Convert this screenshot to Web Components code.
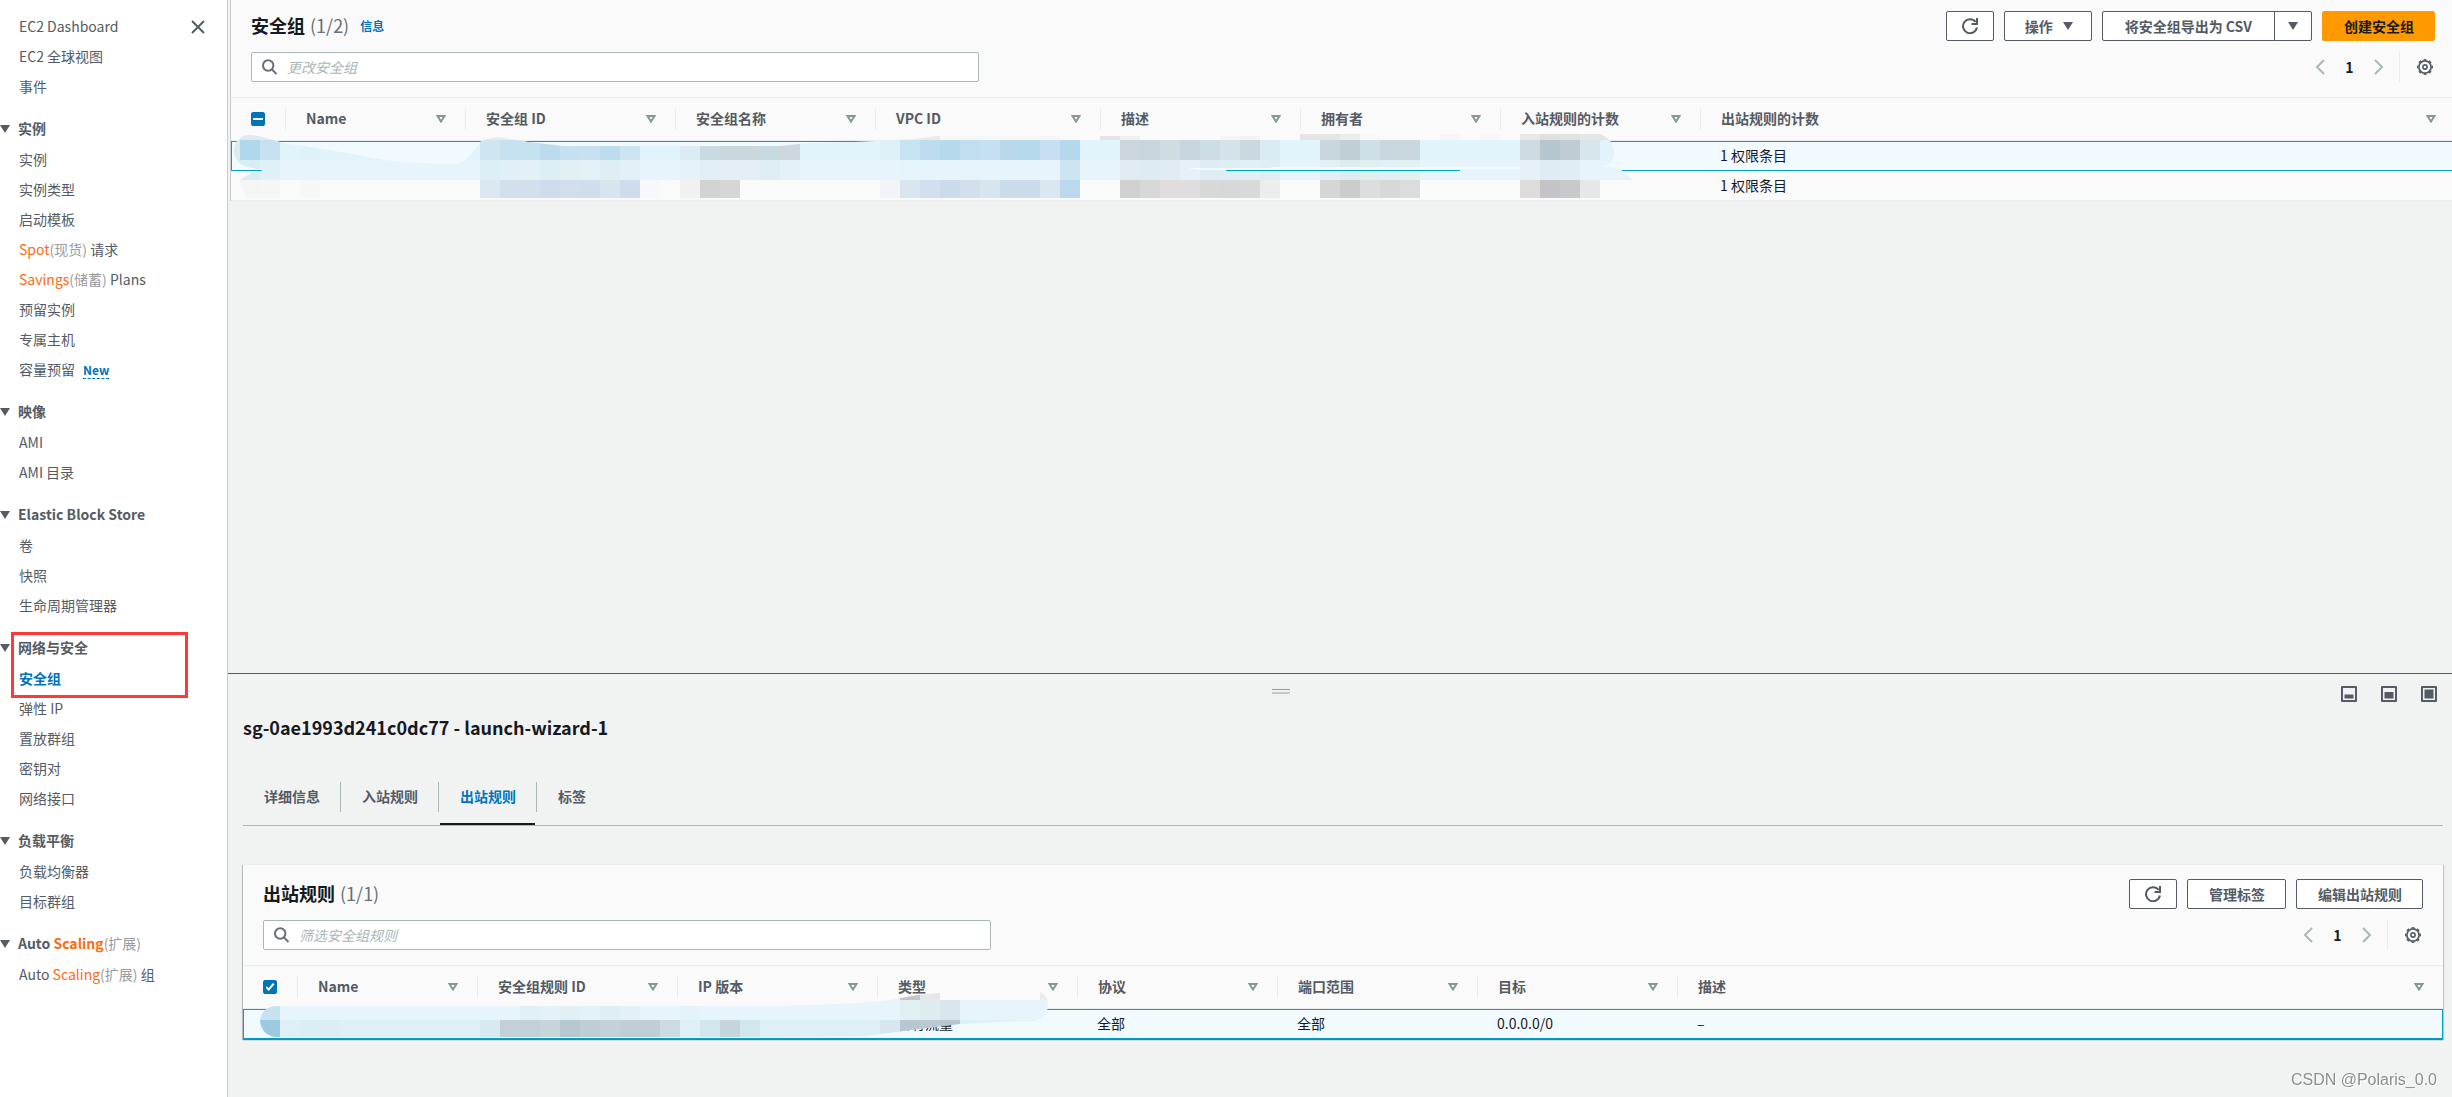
<!DOCTYPE html>
<html lang="zh-CN">
<head>
<meta charset="utf-8">
<title>安全组 | EC2 管理控制台</title>
<style>
  body{
    margin: 0;
    min-height: 100vh;
    display: flex;
    background: #f1f3f3;
    color: #16191f;
    font-family: "Noto Sans CJK SC", "Noto Sans", sans-serif;
    font-size: 14px;
    line-height: 22px;
  }
  main{
    flex: 1;
    min-width: 0;
    display: flex;
    flex-direction: column;
  }
  .listPanel{
    margin-left: 2px;
    border-left: 1px solid #c8cccc;
    --edge: 17px;
  }
  .info{
    font-size: 12px;
    font-weight: 700;
    color: #0073bb;
    text-decoration: none;
  }
  .mark{
    position: fixed;
    right: 15px;
    bottom: 6px;
    font-family: "Liberation Sans", Arial, sans-serif;
    font-size: 16px;
    color: #8c8e8e;
    text-shadow: 1px 1px 0 #fff;
  }
</style>
</head>
<body>
<nav-sidebar>
  <nav-link close>EC2 Dashboard</nav-link>
  <nav-link>EC2 全球视图</nav-link>
  <nav-link>事件</nav-link>
  <nav-group>
    <span slot="title">实例</span>
    <nav-link>实例</nav-link>
    <nav-link>实例类型</nav-link>
    <nav-link>启动模板</nav-link>
    <nav-link><hint-word note="现货">Spot</hint-word> 请求</nav-link>
    <nav-link><hint-word note="储蓄">Savings</hint-word> Plans</nav-link>
    <nav-link>预留实例</nav-link>
    <nav-link>专属主机</nav-link>
    <nav-link badge="New">容量预留</nav-link>
  </nav-group>
  <nav-group>
    <span slot="title">映像</span>
    <nav-link>AMI</nav-link>
    <nav-link>AMI 目录</nav-link>
  </nav-group>
  <nav-group>
    <span slot="title">Elastic Block Store</span>
    <nav-link>卷</nav-link>
    <nav-link>快照</nav-link>
    <nav-link>生命周期管理器</nav-link>
  </nav-group>
  <nav-group framed>
    <span slot="title">网络与安全</span>
    <nav-link active>安全组</nav-link>
    <nav-link>弹性 IP</nav-link>
    <nav-link>置放群组</nav-link>
    <nav-link>密钥对</nav-link>
    <nav-link>网络接口</nav-link>
  </nav-group>
  <nav-group>
    <span slot="title">负载平衡</span>
    <nav-link>负载均衡器</nav-link>
    <nav-link>目标群组</nav-link>
  </nav-group>
  <nav-group>
    <span slot="title">Auto <hint-word note="扩展">Scaling</hint-word></span>
    <nav-link>Auto <hint-word note="扩展">Scaling</hint-word> 组</nav-link>
  </nav-group>
</nav-sidebar>

<main>
  <table-panel class="listPanel" heading="安全组" counter="(1/2)" search="更改安全组">
    <a slot="info" class="info" href="#">信息</a>
    <icon-button slot="actions"></icon-button>
    <text-button slot="actions" caret>操作</text-button>
    <split-button slot="actions">将安全组导出为 CSV</split-button>
    <text-button slot="actions" primary>创建安全组</text-button>
    <data-table id="groups"><smudge-layer name="groups"></smudge-layer></data-table>
  </table-panel>

  <split-panel heading="sg-0ae1993d241c0dc77 - launch-wizard-1">
    <tab-bar slot="tabs" tabs="详细信息,入站规则,出站规则,标签" active="2"></tab-bar>
    <table-panel boxed heading="出站规则" counter="(1/1)" search="筛选安全组规则">
      <icon-button slot="actions"></icon-button>
      <text-button slot="actions">管理标签</text-button>
      <text-button slot="actions">编辑出站规则</text-button>
      <data-table id="rules" enclosed><smudge-layer name="rules"></smudge-layer></data-table>
    </table-panel>
  </split-panel>
</main>
<div class="mark">CSDN @Polaris_0.0</div>

<script>
// attaches an open shadow root with the given markup
class BaseElement extends HTMLElement {
  render(html) {
    if (!this.shadowRoot) this.attachShadow({ mode: 'open' });
    this.shadowRoot.innerHTML = html;
  }
}

class NavSidebar extends BaseElement {
  connectedCallback() {
    this.render(`
<style>
  :host{
    display: block;
    flex: none;
    box-sizing: border-box;
    width: 228px;
    padding: 12px 0;
    border-right: 1px solid #c8cccc;
    background: #fff;
    color: #545b64;
  }
</style>
<nav><slot></slot></nav>`);
  }
}

class NavGroup extends BaseElement {
  connectedCallback() {
    this.render(`
<style>
  :host{
    display: block;
    position: relative;
    margin-top: 11px;
  }
  .title{
    box-sizing: border-box;
    height: 32px;
    display: flex;
    align-items: center;
    gap: 8px;
    padding-bottom: 2px;
    font-weight: 700;
  }
  .title svg{ margin-top: 2px; }
  .frame{ display: none; }
  :host([framed]) .frame{
    display: block;
    position: absolute;
    box-sizing: border-box;
    top: 0;
    left: 11px;
    width: 177px;
    height: 66px;
    border: 3px solid #ff3838;
  }
</style>
<div class="title">
  <svg width="10" height="8" fill="#545b64"><path d="M0 0h10L5 8z"/></svg>
  <slot name="title"></slot>
</div>
<slot></slot>
<div class="frame"></div>`);
  }
}

class NavLink extends BaseElement {
  connectedCallback() {
    const badge = this.getAttribute('badge');
    this.render(`
<style>
  :host{
    box-sizing: border-box;
    display: flex;
    align-items: center;
    height: 30px;
    padding: 0 22px 2px 19px;
  }
  a{
    color: inherit;
    text-decoration: none;
  }
  :host([active]) a{
    color: #0073bb;
    font-weight: 700;
  }
  .badge{
    margin: 2px 0 0 8px;
    border-bottom: 1px dashed #0073bb;
    color: #0073bb;
    font-size: 12px;
    font-weight: 700;
    line-height: 16px;
  }
  button{
    margin: 2px 0 0 auto;
    padding: 0;
    border: 0;
    background: none;
    line-height: 0;
  }
</style>
<a href="#"><slot></slot></a>
${badge ? `<span class="badge">${badge}</span>` : ''}
${this.hasAttribute('close') ? `<button aria-label="关闭"><svg width="14" height="14" stroke="#545b64" stroke-width="2"><path d="M1 1l12 12M13 1L1 13"/></svg></button>` : ''}`);
  }
}

class HintWord extends BaseElement {
  connectedCallback() {
    this.render(`
<style>
  :host{ color: #ff6a13; }
  .note{ color: #9a9c9f; font-weight: 400; }
</style>
<slot></slot><span class="note">(${this.getAttribute('note')})</span>`);
  }
}

const buttonStyle = `
  :host{ display: flex; }
  button{
    box-sizing: border-box;
    height: 30px;
    display: flex;
    align-items: center;
    justify-content: center;
    gap: 10px;
    padding: 0 20px 1px 21px;
    border: 1px solid #545b64;
    border-radius: 2px;
    background: #fff;
    color: #545b64;
    font: inherit;
    font-weight: 700;
    line-height: 22px;
    white-space: nowrap;
  }`;
const caret = '<svg width="10" height="8" fill="#545b64"><path d="M0 0h10L5 8z"/></svg>';

class IconButton extends BaseElement {
  connectedCallback() {
    this.render(`
<style>${buttonStyle}
  button{ width: 48px; padding: 0; }
</style>
<button aria-label="刷新">
  <svg width="16" height="16" viewBox="0 0 16 16" fill="none" stroke="#545b64" stroke-width="2"><path d="M14.9 9.5A7 7 0 1 1 13.6 4M15 0v6H9.5"/></svg>
</button>`);
  }
}

class TextButton extends BaseElement {
  connectedCallback() {
    this.render(`
<style>${buttonStyle}
  :host([primary]) button{
    border-color: #ff9900;
    background: #ff9900;
    color: #16191f;
  }
  :host([caret]) button{ padding: 0 18px 1px 20px; }
</style>
<button><slot></slot>${this.hasAttribute('caret') ? caret : ''}</button>`);
  }
}

class SplitButton extends BaseElement {
  connectedCallback() {
    this.render(`
<style>${buttonStyle}
  .main{
    padding: 0 22px 1px;
    border-radius: 2px 0 0 2px;
  }
  .more{
    width: 38px;
    margin-left: -1px;
    padding: 0;
    border-radius: 0 2px 2px 0;
  }
</style>
<button class="main"><slot></slot></button>
<button class="more" aria-label="更多">${caret}</button>`);
  }
}

class TablePanel extends BaseElement {
  connectedCallback() {
    this.render(`
<style>
  :host{
    display: block;
    background: #fafafa;
  }
  :host([boxed]){
    border-top: 1px solid #eaeded;
    box-shadow: 0 1px 1px 0 rgba(0,28,36,.4), 1px 1px 1px 0 rgba(0,28,36,.15), -1px 1px 1px 0 rgba(0,28,36,.2);
  }
  header{
    display: flex;
    flex-direction: column;
    gap: 11px;
    padding: 11px var(--edge, 20px) 15px 20px;
    border-bottom: 1px solid #eaeded;
  }
  :host([boxed]) header{ padding-top: 14px; }
  .row{
    height: 30px;
    display: flex;
    align-items: center;
  }
  h2{
    margin: 0 5px 0 0;
    padding-bottom: 2px;
    font-size: 18px;
    font-weight: 700;
  }
  .counter{
    margin-right: 11px;
    padding-bottom: 2px;
    font-size: 18px;
    color: #687078;
  }
  .actions{
    margin-left: auto;
    display: flex;
    gap: 10px;
  }
  .search{
    box-sizing: border-box;
    width: 728px;
    height: 30px;
    display: flex;
    align-items: center;
    gap: 9px;
    padding: 0 10px;
    border: 1px solid #aab7b8;
    border-radius: 2px;
    background: #fff;
  }
  input{
    flex: 1;
    padding: 0;
    border: 0;
    outline: 0;
    background: none;
    font: inherit;
  }
  input::placeholder{
    color: #aab7b8;
    font-style: italic;
  }
  .pages{
    margin-left: auto;
    display: flex;
    align-items: center;
    font-weight: 700;
  }
  .pages button{
    width: 16px;
    height: 16px;
    display: flex;
    justify-content: center;
    padding: 0;
    border: 0;
    background: none;
  }
  .num{ width: 43px; text-align: center; }
  .gear{
    display: flex;
    margin-left: 12px;
    padding: 7px 2px 7px 17px;
    border-left: 1px solid #eaeded;
  }
</style>
<header>
  <div class="row">
    <h2>${this.getAttribute('heading')}</h2>
    <span class="counter">${this.getAttribute('counter')}</span>
    <slot name="info"></slot>
    <div class="actions"><slot name="actions"></slot></div>
  </div>
  <div class="row">
    <label class="search">
      <svg width="16" height="16" viewBox="0 0 16 16" fill="none" stroke="#687078" stroke-width="2"><circle cx="6.200" cy="6.500" r="5.200"/><path d="M10 10.500l4.500 4.500"/></svg>
      <input type="search" placeholder="${this.getAttribute('search')}" aria-label="${this.getAttribute('search')}">
    </label>
    <div class="pages">
      <button aria-label="上一页"><svg width="10" height="16" fill="none" stroke="#aab7b8" stroke-width="2"><path d="M9 1L2 8l7 7"/></svg></button>
      <span class="num">1</span>
      <button aria-label="下一页"><svg width="10" height="16" fill="none" stroke="#aab7b8" stroke-width="2"><path d="M1 1l7 7-7 7"/></svg></button>
      <div class="gear"><button aria-label="首选项"><svg width="16" height="16" viewBox="0 0 16 16" fill="none" stroke="#545b64"><circle cx="8" cy="8" r="6.100" stroke-width="1.700"/><circle cx="8" cy="8" r="7.300" stroke-width="1.400" pathLength="80" stroke-dasharray="5 5" stroke-dashoffset="2.500"/><circle cx="8" cy="8" r="2.100" stroke-width="1.600"/></svg></button></div>
    </div>
  </div>
</header>
<slot></slot>`);
  }
}

class DataTable extends BaseElement {
  fill(columns, rows, checked) {
    this.render(`
<style>
  :host{
    display: block;
    position: relative;
  }
  table{
    width: 100%;
    table-layout: fixed;
    border-collapse: separate;
    border-spacing: 0;
  }
  th{
    box-sizing: border-box;
    height: 43px;
    padding: 0;
    border-bottom: 1px solid #eaeded;
    color: #545b64;
    font-weight: 700;
    text-align: left;
  }
  th div{
    box-sizing: border-box;
    height: 22px;
    display: flex;
    align-items: center;
    justify-content: space-between;
    padding: 0 19px 2px 20px;
    border-left: 1px solid #eaeded;
  }
  th svg{ margin-top: 2px; }
  th:last-child div{ padding-right: calc(var(--edge, 20px) - 1px); }
  td{
    box-sizing: border-box;
    height: 30px;
    padding: 0 0 2px 20px;
    border: 0 solid #eaeded;
    border-bottom-width: 1px;
    line-height: 20px;
    white-space: nowrap;
  }
  .pick{ padding-left: 20px; line-height: 0; }
  .selected td{
    border-color: #00a1c9;
    border-top-width: 1px;
    background: #f1faff;
  }
  .selected .pick{ border-left-width: 1px; padding-left: 19px; }
  :host([enclosed]) .selected td:last-child{ border-right-width: 1px; }
  input{
    appearance: none;
    box-sizing: border-box;
    width: 14px;
    height: 14px;
    margin: 0;
    border: 1px solid #687078;
    border-radius: 2px;
    background: #fff;
    display: inline-grid;
    place-items: center;
  }
  input:checked, input:indeterminate{
    border-color: #0073bb;
    background: #0073bb;
  }
  input:indeterminate::after{
    content: "";
    width: 10px;
    height: 2px;
    background: #fff;
  }
  input:checked:not(:indeterminate)::after{
    content: "";
    width: 9px;
    height: 8px;
    background: #fff;
    clip-path: polygon(0 58%, 16% 42%, 34% 66%, 82% 0, 100% 16%, 36% 100%);
  }
</style>
<table>
  <colgroup><col style="width:54px">${columns.map(c => `<col${c[1] ? ` style="width:${c[1]}px"` : ''}>`).join('')}</colgroup>
  <thead><tr>
    <th class="pick"><input type="checkbox" id="all" aria-label="全选" ${checked}></th>
    ${columns.map(c => `<th scope="col"><div>${c[0]}<svg width="10" height="8" fill="none" stroke="#879596" stroke-width="2"><path d="M1.500 1h7L5 6.500z"/></svg></div></th>`).join('')}
  </tr></thead>
  <tbody>
    ${rows.map((r, i) => `<tr class="${i === 0 ? 'selected' : ''}">
      <td class="pick"><input type="checkbox" aria-label="选择行" ${i === 0 ? 'checked' : ''}></td>
      ${columns.map((c, n) => `<td>${r[n] || ''}</td>`).join('')}
    </tr>`).join('')}
  </tbody>
</table>
<slot></slot>`);
    if (!checked) this.shadowRoot.getElementById('all').indeterminate = true;
  }
}

class SplitPanel extends BaseElement {
  connectedCallback() {
    const sizes = [
      '<path d="M3.500 8.500h9v4h-9z"/>',
      '<path d="M3.500 6h9v6.500h-9z"/>',
      '<path d="M3.500 3.500h9v9h-9z"/>'
    ];
    this.render(`
<style>
  :host{
    display: block;
    margin-top: auto;
    border-top: 1px solid #545b64;
  }
  .bar{
    height: 40px;
    display: grid;
    grid-template-columns: 1fr auto;
    column-gap: 22px;
    align-items: center;
    padding: 0 15px;
  }
  .handle{
    justify-self: center;
    width: 18px;
    height: 2px;
    margin-bottom: 5px;
    border-top: 1px solid #959a9a;
    border-bottom: 2px solid #c4c8c8;
  }
  .sizes{
    display: flex;
    gap: 24px;
  }
  .sizes button{
    padding: 0;
    border: 0;
    background: none;
    line-height: 0;
  }
  h3{
    margin: 0;
    padding: 0 15px;
    font-size: 18px;
    font-weight: 700;
    line-height: 26px;
  }
  .body{ padding: 39px 9px 58px 15px; }
  .content{ margin-top: 38px; }
</style>
<div class="bar">
  <div class="handle"></div>
  <div class="sizes">
    ${sizes.map(s => `<button aria-label="面板大小"><svg width="16" height="16" fill="#545b64"><path fill="none" stroke="#545b64" stroke-width="2" stroke-linejoin="round" d="M1 1h14v14H1z"/>${s}</svg></button>`).join('')}
  </div>
</div>
<h3>${this.getAttribute('heading')}</h3>
<div class="body">
  <slot name="tabs"></slot>
  <div class="content"><slot></slot></div>
</div>`);
  }
}

class TabBar extends BaseElement {
  connectedCallback() {
    const active = Number(this.getAttribute('active'));
    this.render(`
<style>
  :host{
    display: flex;
    height: 46px;
    border-bottom: 1px solid #aab7b8;
  }
  button{
    display: flex;
    flex-direction: column;
    padding: 3px 0 0;
    border: 0;
    background: none;
    color: #545b64;
    font: inherit;
    font-weight: 700;
  }
  span{
    height: 30px;
    padding: 0 20px 0 21px;
    border-right: 1px solid #aab7b8;
    line-height: 28px;
  }
  button:last-child span{ border: 0; }
  .active{ color: #0073bb; }
  .active::after{
    content: "";
    align-self: stretch;
    height: 2px;
    margin: 11px 2px 0 1px;
    background: #16191f;
  }
</style>
${this.getAttribute('tabs').split(',').map((t, i) => `<button role="tab" class="${i === active ? 'active' : ''}"><span>${t}</span></button>`).join('')}`);
  }
}

// Mosaic brush strokes over private cells.
// cells: [y, height, first x, colours of 20px blocks ('-' leaves a gap)]
const smudges = {
  groups: {
    box: '231 98 1420 104',
    clip: 'M234 150Q236 135 250 135Q262 136 283 143L330 150L384 160Q420 164 455 164Q466 164 480 142Q490 136 505 138L528 142L563 146H780L808 143L855 142L915 139L938 136H1260V134H1600Q1614 140 1614 152Q1614 165 1602 167Q1624 166 1632 180H1600V199H1190L1160 200H250Q240 192 240 180L248 175Q254 171 262 171L261 169Q234 168 234 150Z',
    fill: [[134, 6, '#f6f7f7'], [140, 20, '#e2f4fb'], [160, 20, '#e8f4fb'], [180, 20, '#fafafa']],
    cells: [
      [134, 6, 240, '#dfe9ee #e3eaee - - - - - - - - - - #ebebeb #e9ecef #ececec - - - - - - - - - - - - - - - - - - #ececec #e9e9e9 - - - - - #f5f5f5 #fafafa #fafafa #e4e4e4 #f0f0f0 #fafafa #fafafa #fafafa #fafafa #f5f5f5 #f3f3f3 #fafafa #fafafa #e4e4e4 #e4e4e4 #ececec #f8f8f8 #fafafa #fafafa #fafafa #f6f6f6 #fafafa #f7f7f7 #fafafa #e8e8e8 #e0e0e0 #e2e2e2 #e6e6e6 #e6e6e6'],
      [140, 20, 220, '#dbebf2 #b0d7ec #c5e1f3 - #dff1f9 - - - - - - - - #d0e5f2 #c6e1f0 #c6e1f0 #bedbed #c5e1f0 #c8e1f2 #bfdcef #cbe5f3 - - #dcecf2 #c9dae0 #cad7dc #cad7dc #c8dae1 #ccd8dc'],
      [140, 20, 880, '#ddf0f8 #c6e3f1 #bedcef #b6d9ec #c1def0 #c4e0f1 #bad8ec #b6d9eb #c7dff0 #b4d9ee - - #cbd7dd #c9d5dc #cfdde3 #c8d7df #ccdde5 #d3e3e9 #cad8df #daeaf2 - - #c8d6dd #c0ced5 #cfdfe7 #c9d8df #c9d8df - - - - - #cddbe0 #b5c6cf #bfccd4 #d7e6ed'],
      [160, 20, 220, '#dbebf2 #d9edf5 #e0f0f7 - - - - - - - - - - #dceef6 #e1f0f6 #e3f1f7 #deeef5 #e2f0f6 #e4f2f7 #deeef4 #e3f0f6 - - #e6f2f8 #e1eff4 #e3eff4 #e3eff4 #deeef3 #e4f1f6'],
      [160, 20, 900, '#e4f4f8 - - - - - - - #cde5f1 - - #e1ecf2 #deebf1 #e0ecf2 #e5f1f7 #dfecf3 #dfeef4 #e2eff4 #e0edf3 - - #e3eff5 #deebf1 #e0f0ee #e2eff4 #e2f1f0 - - - - - #e5f1f6 #dfecf4 #e1edf5'],
      [180, 18, 240, '#f5f5f6 #f6f6f7 - #f7f7f7 - - - - - - - - #dbe7f1 #d3e0eb #d3e0eb #cedcec #d2deec #d0deec #d9e5ee #cedcec #f7f8fb - #f1f1f1 #d2d2d3 #d6d6d6'],
      [180, 18, 880, '#f3f4f7 #d9e6ef #d2dfed #cadbec #d3dfed #d6e5ee #cbdce9 #cadbec #dbe6f0 #bcd8ec - - #d1d1d1 #d6d7d7 #e1dcde #dfdddf #d9d8d8 #d7d6d8 #dad9da #ededed - - #d6d6d6 #cccccd #dcdddf #d9d8d8 #dcdcdd - - - - - #dedcda #c3c3c8 #c9c9cc #e7e7e9']
    ],
    lines: '<path fill="#f1faff" d="M1186 168h85v-1h249v2h-60v2h-234v-1h-26z"/><path fill="#00a1c9" d="M1226 170h234v1h-234z"/>'
  },
  rules: {
    box: '243 966 1420 76',
    clip: 'M260 1021Q262 1006 278 1006H782L860 1003L890 1000L918 995L940 993V1000H1040V992Q1048 996 1048 1006Q1047 1018 1033 1021H1020L960 1024L918 1029L866 1036L782 1037H275Q262 1035 260 1021Z',
    fill: [[992, 28, '#e7f4fb'], [1020, 20, '#deeff6']],
    cells: [
      [992, 8, 900, '#c4c4c4 #e6e7e7 - - - - - #eaecec'],
      [1000, 20, 260, '#c6e1ef - - - - - - - - - - - - #e1f0f6 #e4f1f7 #e2f0f6 #e4f2f7 #deeef3 #e3f0f7 - - #e5f2f8'],
      [1000, 20, 900, '#e0eff1 #deecef #d9e6ed'],
      [1020, 20, 260, '#9bcae1 - #dbeef4 #dcedf4 - - - - - - - #d8eaf1 #c3d0d7 #c3d0d7 #c7d4da #b7c8d0 #bfced5 #c4d1d8 #c1ced5 #c1ced5 #ccdae1 - #d3e6ee #c6d4dc #d3e6ee'],
      [1020, 20, 880, '#d6e7ef #b8c7cf #bbcad2 #b8c7cf']
    ],
    lines: ''
  }
};

class SmudgeLayer extends BaseElement {
  connectedCallback() {
    const s = smudges[this.getAttribute('name')];
    const [x, y, w, h] = s.box.split(' ');
    const rect = (rx, ry, rw, rh, c) => `<rect x="${rx}" y="${ry}" width="${rw}" height="${rh}" fill="${c}"/>`;
    const blocks = s.cells.map(([cy, ch, cx, colors]) =>
      colors.split(' ').map((c, i) => c === '-' ? '' : rect(cx + i * 20, cy, 20, ch, c)).join('')).join('');
    this.render(`
<style>
  :host{
    position: absolute;
    top: 0;
    left: 0;
    line-height: 0;
    pointer-events: none;
  }
</style>
<svg width="${w}" height="${h}" viewBox="${s.box}" shape-rendering="crispEdges" aria-hidden="true">
  <clipPath id="stroke"><path d="${s.clip}"/></clipPath>
  <g clip-path="url(#stroke)">
    ${s.fill.map(([fy, fh, c]) => rect(x, fy, w, fh, c)).join('')}
    ${blocks}
  </g>
  ${s.lines}
</svg>`);
  }
}

customElements.define('hint-word', HintWord);
customElements.define('nav-link', NavLink);
customElements.define('nav-group', NavGroup);
customElements.define('nav-sidebar', NavSidebar);
customElements.define('icon-button', IconButton);
customElements.define('text-button', TextButton);
customElements.define('split-button', SplitButton);
customElements.define('data-table', DataTable);
customElements.define('table-panel', TablePanel);
customElements.define('tab-bar', TabBar);
customElements.define('split-panel', SplitPanel);
customElements.define('smudge-layer', SmudgeLayer);

document.getElementById('groups').fill([
  ['Name', 180], ['安全组 ID', 210], ['安全组名称', 200], ['VPC ID', 225], ['描述', 200],
  ['拥有者', 200], ['入站规则的计数', 200], ['出站规则的计数']
], [
  ['', '', '', '', '', '', '', '1 权限条目'],
  ['', '', '', '', '', '', '', '1 权限条目']
], '');

document.getElementById('rules').fill([
  ['Name', 180], ['安全组规则 ID', 200], ['IP 版本', 200], ['类型', 200], ['协议', 200],
  ['端口范围', 200], ['目标', 200], ['描述']
], [
  ['', '', '', '所有流量', '全部', '全部', '0.0.0.0/0', '–']
], 'checked');
</script>
</body>
</html>
